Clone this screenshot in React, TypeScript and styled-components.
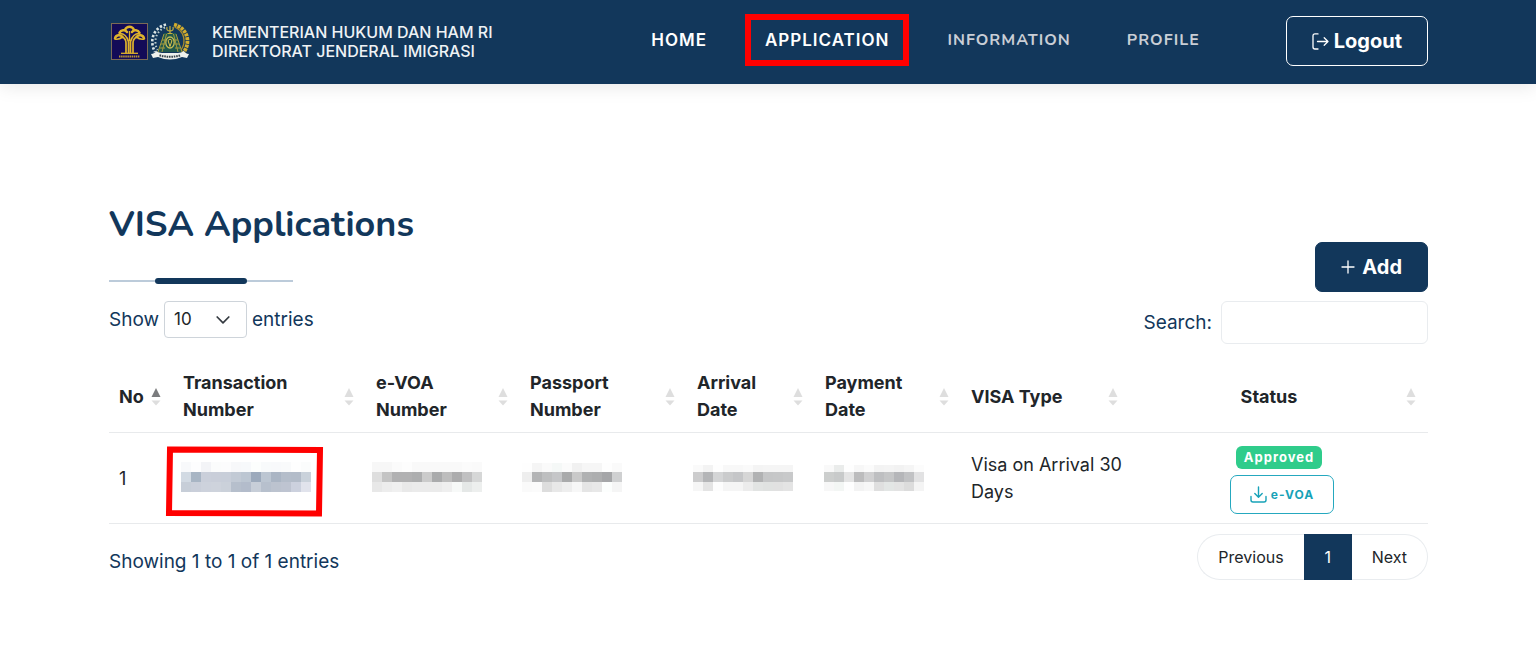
import React from "react";
import styled, { createGlobalStyle } from "styled-components";

const navy = "#12375b";

const GlobalStyle = createGlobalStyle`
  * { box-sizing: border-box; }
  body {
    margin: 0;
    background: #fff;
    color: #212529;
    font-family: Inter, "Liberation Sans", sans-serif;
    font-size: 19px;
    line-height: 27px;
  }
  button, input, select { font: inherit; color: inherit; }
`;

const Header = styled.header`
  display: flex;
  align-items: center;
  height: 84px;
  padding: 0 108px 2px 110px;
  background: ${navy};
  box-shadow: 0 2px 18px rgba(0, 0, 0, 0.1);
`;

const Brand = styled.a`
  display: flex;
  align-items: center;
  color: #eef2f5;
  font-size: 16px;
  font-weight: 500;
  line-height: 19px;
  text-decoration: none;
  white-space: nowrap;
`;

const BrandText = styled.span`
  margin-left: 21px;
  padding-top: 2px;
`;

const Nav = styled.nav`
  display: flex;
  align-items: center;
  margin-left: auto;
  padding-bottom: 2px;
  gap: 38px;
`;

const NavLink = styled.a<{ $strong?: boolean; $framed?: boolean }>`
  display: block;
  color: ${(p) => (p.$strong ? "#fff" : "#c9ced6")};
  font-family: ${(p) => (p.$strong ? "Inter" : "Nunito, Inter")}, sans-serif;
  font-size: ${(p) => (p.$strong ? 17 : 16)}px;
  font-weight: ${(p) => (p.$strong ? 600 : 700)};
  letter-spacing: 1px;
  line-height: 24px;
  text-decoration: none;
  border: ${(p) => (p.$framed ? "6px solid #f00" : "0")};
  padding: ${(p) => (p.$framed ? "8px 14px" : "0")};
  & + &:nth-child(n + 4) { margin-left: 18px; }
`;

const Button = styled.button<{ $outline?: boolean }>`
  display: flex;
  align-items: center;
  justify-content: center;
  gap: ${(p) => (p.$outline ? 5 : 7)}px;
  height: 50px;
  padding: 0 25px;
  border: 1px solid ${(p) => (p.$outline ? "#fff" : navy)};
  border-radius: 7px;
  background: ${navy};
  color: #fff;
  font-size: 20px;
  font-weight: 700;
  cursor: pointer;
`;

const LogoutSlot = styled.div`
  margin-left: 86px;
`;

const Main = styled.main`
  padding: 118px 108px 40px 109px;
  color: ${navy};
`;

const TitleRow = styled.div`
  display: flex;
  justify-content: space-between;
  align-items: flex-end;
`;

const Title = styled.h1`
  margin: 0 0 30px;
  font-family: Nunito, Lato, sans-serif;
  font-size: 36px;
  font-weight: 700;
  line-height: 46px;
`;

const Divider = styled.div`
  display: flex;
  align-items: center;
  width: 184px;
  margin-bottom: 8px;
  &::before, &::after { content: ""; flex: 1; height: 2px; background: #bccbda; }
`;

const DividerBar = styled.span`
  width: 92px;
  height: 6px;
  border-radius: 3px;
  background: ${navy};
`;

const Controls = styled.div`
  display: flex;
  justify-content: space-between;
  align-items: flex-start;
  margin: 9px 0 17px;
`;

const Length = styled.label`
  display: flex;
  align-items: center;
  gap: 5px;
  height: 37px;
`;

const SelectBox = styled.span`
  position: relative;
  display: flex;
  color: #212529;
  svg { position: absolute; right: 17px; top: 12px; pointer-events: none; }
`;

const Select = styled.select`
  appearance: none;
  width: 83px;
  height: 37px;
  padding: 0 9px;
  border: 1px solid #ced4da;
  border-radius: 4px;
  background: #fff;
  font-size: 17px;
`;

const Search = styled.label`
  display: flex;
  align-items: center;
  gap: 9px;
`;

const SearchInput = styled.input`
  width: 207px;
  height: 43px;
  padding: 0 12px;
  border: 1px solid #e9ecef;
  border-radius: 6px;
  background: #fff;
`;

const Table = styled.table`
  width: 100%;
  table-layout: fixed;
  border-collapse: collapse;
  color: #212529;
  tr { border-bottom: 1px solid #e8eaec; }
`;

const Th = styled.th<{ $center?: boolean }>`
  position: relative;
  padding: 8px 30px 9px 10px;
  font-size: 18px;
  font-weight: 700;
  text-align: ${(p) => (p.$center ? "center" : "left")};
  &:first-child { padding-right: 0; }
`;

const SortIcon = styled.svg`
  position: absolute;
  right: 12px;
  top: 50%;
  margin-top: -9px;
`;

const Td = styled.td<{ $center?: boolean }>`
  position: relative;
  height: 91px;
  padding: 9px ${(p) => (p.$center ? 10 : 4)}px 9px 10px;
  font-size: 18px;
  text-align: ${(p) => (p.$center ? "center" : "left")};
  vertical-align: middle;
`;

const MosaicSvg = styled.svg`
  display: block;
  overflow: visible;
`;

const Frame = styled.svg`
  position: absolute;
  left: -8px;
  top: 12px;
`;

const StatusStack = styled.div`
  display: flex;
  flex-direction: column;
  align-items: center;
  gap: 6px;
  padding-top: 4px;
`;

const Badge = styled.span`
  padding: 0 8px;
  border-radius: 6px;
  background: #2fcc8b;
  color: #fff;
  font-size: 13px;
  font-weight: 700;
  letter-spacing: 1px;
  line-height: 23px;
`;

const DownloadLink = styled.a`
  display: flex;
  align-items: center;
  justify-content: center;
  gap: 4px;
  width: 104px;
  height: 39px;
  margin-left: 6px;
  border: 1px solid #25a8bf;
  border-radius: 7px;
  color: #17a2b8;
  font-size: 12px;
  font-weight: 700;
  letter-spacing: 1px;
  text-decoration: none;
`;

const Footer = styled.div`
  display: flex;
  justify-content: space-between;
  align-items: flex-start;
  padding-top: 10px;
`;

const Info = styled.p`
  margin: 14px 0 0;
`;

const Pagination = styled.nav`
  display: flex;
  height: 46px;
`;

const PageButton = styled.button<{ $active?: boolean }>`
  padding: 0 ${(p) => (p.$active ? 18 : 20)}px;
  border: 1px solid ${(p) => (p.$active ? navy : "#e9ecef")};
  background: ${(p) => (p.$active ? navy : "#fff")};
  color: ${(p) => (p.$active ? "#fff" : "#212529")};
  font-size: 16px;
  min-width: 48px;
  cursor: pointer;
  &:first-child { border-right: 0; border-radius: 23px 0 0 23px; }
  &:last-child { border-left: 0; border-radius: 0 23px 23px 0; }
`;

const PengayomanLogo = () => (
  <svg width="39" height="39" viewBox="0 0 39 39" role="img" aria-label="Pengayoman">
    <rect x="1.5" y="1.5" width="36" height="36" fill="#130b57" stroke="#7b6a55" />
    <g fill="none" stroke="#dfb32c" strokeWidth="2.5" strokeLinecap="round">
      <path d="M5 16.500a4.200 4.200 0 0 1 7.500-1.500M9.500 10.800a4.500 4.500 0 0 1 7.500-.800M15.200 7.500a4.700 4.700 0 0 1 8.600 0M22 10a4.500 4.500 0 0 1 7.500.800M26.500 15a4.200 4.200 0 0 1 7.500 1.500" />
    </g>
    <g fill="none" stroke="#dfb32c" strokeWidth="1.7">
      <path d="M5 17q4 1 7.500-2 3.500 2 3.500 6v10M34 17q-4 1-7.500-2-3.500 2-3.500 6v10M10 11.500q6 0 8.500 8V31M29 11.500q-6 0-8.500 8V31" />
      <path d="M19.500 9v10" strokeWidth="1.300" />
    </g>
    <path d="M11 31.300h17" stroke="#dfb32c" strokeWidth="1.300" />
    <path d="M9 34.500h21" stroke="#b99637" strokeWidth="2" strokeDasharray="1.500 0.600" />
  </svg>
);

const ImigrasiLogo = () => (
  <svg width="42" height="39" viewBox="0 0 42 39" role="img" aria-label="Imigrasi">
    <path d="M17 2.500C4 6 0 19 6 30" fill="none" stroke="#dce5e5" strokeWidth="2.600" strokeDasharray="2.400 1.800" />
    <path d="M16 5.500C7 9 4 19 8.500 28" fill="none" stroke="#b9cacd" strokeWidth="2" strokeDasharray="1.500 2.200" />
    <path d="M25 2.500c14 4 17 18 9.500 28" fill="none" stroke="#d2ac2e" strokeWidth="3.800" strokeDasharray="3 .800" />
    <path d="M25.500 5c10 4 12 15 6.500 23" fill="none" stroke="#a98d2c" strokeWidth="1.300" />
    <path d="M15 11h12l6 19H9z" fill="#21594d" />
    <path d="M15 12 9 30M17.500 12 13 30M27 12l6 18M24.500 12 29 30M13 18h4M25 18h4M12 22h4M26 22h4M11 26h5M26 26h5" stroke="#a59a3d" strokeWidth="1" />
    <path d="M18 5q-1 4 3 4t3-4M21 4v8M18.500 11.500h5" fill="none" stroke="#c7b13f" strokeWidth="1.200" />
    <ellipse cx="21" cy="20.500" rx="4.200" ry="5.500" fill="#174944" stroke="#c4bd56" strokeWidth="1.300" />
    <path d="M19 18.500q2-3 4 0l-2 6z" fill="none" stroke="#e1c54a" />
    <path d="M2 32q4-.500 5-3 3 2 6 2h16q3 0 6-2 1 2.500 5 3l-2 4-5-1q-12 5-24 0l-5 1z" fill="#eef1ed" />
    <path d="M10.500 33.300q10.500 3 21 0" fill="none" stroke="#37434a" strokeWidth="2" strokeDasharray="1.600 .800" />
  </svg>
);

const LogoutIcon = () => (
  <svg width="17" height="17" viewBox="0 0 17 17" fill="none" stroke="currentColor" strokeWidth="1.300" strokeLinecap="round" strokeLinejoin="round" aria-hidden="true">
    <path d="M6 .900H3Q1 .900 1 3v11q0 2 2 2h3M5.500 8.500h10.300M12.200 4.700 16 8.500l-3.800 3.800" />
  </svg>
);

const PlusIcon = () => (
  <svg width="14" height="14" viewBox="0 0 14 14" stroke="currentColor" strokeWidth="1.300" strokeLinecap="round" aria-hidden="true">
    <path d="M7 1v12M1 7h12" />
  </svg>
);

const DownloadIcon = () => (
  <svg width="17" height="17" viewBox="0 0 17 17" fill="none" stroke="currentColor" strokeWidth="1.400" strokeLinecap="round" strokeLinejoin="round" aria-hidden="true">
    <path d="M1 10.500V14q0 2 2 2h11q2 0 2-2v-3.500M8.500 1v10M4.800 7.500l3.700 3.700 3.700-3.700" />
  </svg>
);

const ChevronIcon = () => (
  <svg width="14" height="14" viewBox="0 0 14 14" fill="none" stroke="#343a40" strokeWidth="1.700" strokeLinecap="round" strokeLinejoin="round" aria-hidden="true">
    <path d="m1.200 4 5.800 5.800L12.800 4" />
  </svg>
);

const Sort = ({ ascending }: { ascending?: boolean }) => (
  <SortIcon width="10" height="18" viewBox="0 0 10 18" aria-hidden="true">
    <path d="M.500 9 5 0l4.500 9z" fill={ascending ? "#7b7c7e" : "#dedede"} />
    <path d="M.500 12.500h9L5 17.500z" fill="#dedede" />
  </SortIcon>
);

type MosaicData = { start: number; top: number; bottom: number; rows: string[][] };

const Mosaic = ({ start, top, bottom, rows }: MosaicData) => {
  const y = [10 - top, 10, 20];
  const heights = [top, 10, bottom];
  return (
    <MosaicSvg width="110" height="33" viewBox="0 0 110 33" shapeRendering="crispEdges" aria-hidden="true">
      {rows.map((row, r) =>
        row.map((color, c) => (
          <rect key={`${r}-${c}`} x={start + c * 10} y={y[r]} width="10" height={heights[r]} fill={`#${color}`} />
        ))
      )}
    </MosaicSvg>
  );
};

const shades = (text: string) => text.split(" ");

const mosaics: MosaicData[] = [
  {
    start: -2, top: 10, bottom: 10,
    rows: [
      shades("f8f9fb fdfdfe f3f4f7 fbfcfc fcfcfd f7f8fa f7f9fb fcfefd f8fafb f8f9fb f9fafb fefefe fbfcfc"),
      shades("d2dae3 a8b5c4 cacfda c9ced9 c8ced9 c2cad5 bcc6d2 9caabc bcc6d2 aab5c4 b4bdca b3bcc9 cad2db"),
      shades("c7ced8 cacfda cdd2dc ced3dc cbd1da b6bfcc b3bccb c7ced8 b7c0cd bcc3cf bec4d1 ccd1de e1e3ec"),
    ],
  },
  {
    start: -4, top: 10, bottom: 10,
    rows: [
      shades("f7f7f7 f7f7f7 fbfbfb fdfdfd f9f9f9 f9f9f9 f9f9f9 f9f9f9 f9f9f9 fbfbfb fafafa"),
      shades("dedede c4c4c4 b1b1b2 b1b1b2 adaeaf cbcbcb aaabac bdbdbd acacad c0c0c1 d6d7d7"),
      shades("e8e8e8 ededed f0f0f0 e9e9e9 ebebeb ebebeb ebebeb efefef f7f9f8 e5e8e7 edefee"),
    ],
  },
  {
    start: -8, top: 9, bottom: 10,
    rows: [
      shades("fefefe f5f5f5 fafafa f5f8f7 fbfbfb f1f1f1 f6f6f6 f6f6f6 fefefe fafafa"),
      shades("eeeeee b3b4b5 bebfc0 c5c6c8 a9aaab c9c9c9 b0b1b2 adaeaf a5a6a8 cfd0d1"),
      shades("fafafa fbfbfb dddddd e8e8e8 eeeeee f7f7f7 e5e5e5 e8e8e8 fcfefd f5f5f5"),
    ],
  },
  {
    start: -4, top: 7, bottom: 9,
    rows: [
      shades("fafafa f3f3f3 fefefe f8f8f8 f8f8f8 fafafa f4f4f4 f5f5f5 f5f5f5 f5f5f5"),
      shades("cccccd b4b5b7 d4d5d6 cacbcc c5c6c8 d6d6d6 b1b2b3 c5c6c7 c6c7c8 c8c9ca"),
      shades("f6f6f6 e4e4e4 fdfdfd f5f5f5 f5f5f5 ececec e2e4e3 e0e2e1 e1e1e1 e4e4e4"),
    ],
  },
  {
    start: -1, top: 7, bottom: 9,
    rows: [
      shades("f9f9f9 eaeceb fefefe f7f7f7 fbfbfb f3f3f3 f4f4f4 f2f2f2 f5f5f5 fcfcfc"),
      shades("cccecd c8caca e4e4e4 bcbcbd d0d0d1 bebfc1 c5c6c7 b5b6b9 c1c2c4 e2e2e3"),
      shades("f7f7f7 f3f6f4 fefefe f3f3f3 f7f7f7 dfdfdf e3e6e5 e3e3e3 dcdcdc f4f4f4"),
    ],
  },
];

const columns = [
  { label: "No", width: 64 },
  { label: "Transaction Number", width: 193 },
  { label: "e-VOA Number", width: 154 },
  { label: "Passport Number", width: 167 },
  { label: "Arrival Date", width: 128 },
  { label: "Payment Date", width: 146 },
  { label: "VISA Type", width: 169 },
  { label: "Status", width: 298 },
];

export default function App() {
  return (
    <>
      <GlobalStyle />
      <Header>
        <Brand href="#">
          <PengayomanLogo />
          <ImigrasiLogo />
          <BrandText>
            KEMENTERIAN HUKUM DAN HAM RI
            <br />
            DIREKTORAT JENDERAL IMIGRASI
          </BrandText>
        </Brand>
        <Nav aria-label="Main">
          <NavLink href="#home" $strong>HOME</NavLink>
          <NavLink href="#application" $strong $framed aria-current="page">APPLICATION</NavLink>
          <NavLink href="#information">INFORMATION</NavLink>
          <NavLink href="#profile">PROFILE</NavLink>
        </Nav>
        <LogoutSlot>
          <Button type="button" $outline>
            <LogoutIcon />
            Logout
          </Button>
        </LogoutSlot>
      </Header>
      <Main>
        <TitleRow>
          <div>
            <Title>VISA Applications</Title>
            <Divider><DividerBar /></Divider>
          </div>
          <Button type="button">
            <PlusIcon />
            Add
          </Button>
        </TitleRow>
        <Controls>
          <Length>
            Show
            <SelectBox>
              <Select defaultValue="10" aria-label="Entries per page">
                <option>10</option>
                <option>25</option>
                <option>50</option>
                <option>100</option>
              </Select>
              <ChevronIcon />
            </SelectBox>
            entries
          </Length>
          <Search>
            Search:
            <SearchInput type="search" />
          </Search>
        </Controls>
        <Table>
          <colgroup>
            {columns.map((c) => <col key={c.label} width={c.width} />)}
          </colgroup>
          <thead>
            <tr>
              {columns.map((c, i) => (
                <Th key={c.label} scope="col" $center={c.label === "Status"}>
                  {c.label}
                  <Sort ascending={i === 0} />
                </Th>
              ))}
            </tr>
          </thead>
          <tbody>
            <tr>
              <Td>1</Td>
              {mosaics.map((m, i) => (
                <Td key={i}>
                  <Mosaic {...m} />
                  {i === 0 && (
                    <Frame width="160" height="74" viewBox="0 0 160 74" aria-hidden="true">
                      <path d="M5 4.500 155 5l-1 63.500L4 68z" fill="none" stroke="#f00" strokeWidth="6" />
                    </Frame>
                  )}
                </Td>
              ))}
              <Td>Visa on Arrival 30 Days</Td>
              <Td $center>
                <StatusStack>
                  <Badge>Approved</Badge>
                  <DownloadLink href="#e-voa">
                    <DownloadIcon />
                    e-VOA
                  </DownloadLink>
                </StatusStack>
              </Td>
            </tr>
          </tbody>
        </Table>
        <Footer>
          <Info>Showing 1 to 1 of 1 entries</Info>
          <Pagination aria-label="Pages">
            <PageButton type="button">Previous</PageButton>
            <PageButton type="button" $active aria-current="page">1</PageButton>
            <PageButton type="button">Next</PageButton>
          </Pagination>
        </Footer>
      </Main>
    </>
  );
}
